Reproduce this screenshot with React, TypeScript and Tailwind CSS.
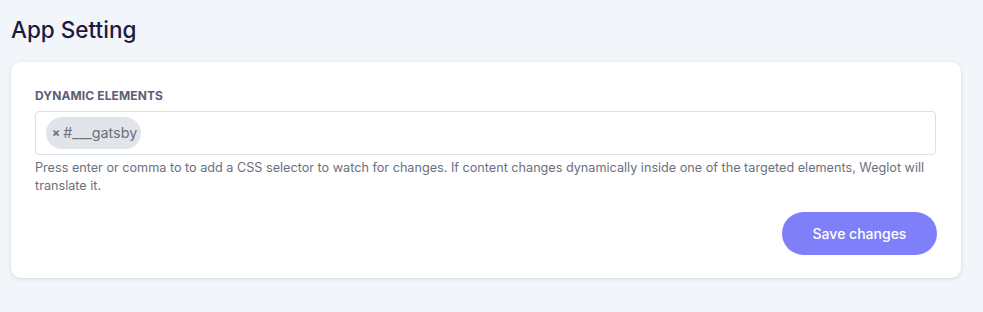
import React from "react";

export default function App() {
  return (
    <div className="min-h-[312px] w-full bg-[#f2f6fa] px-[11px] pt-[14px] font-['Inter',sans-serif]">
      <h1 className="text-[22.5px] font-medium leading-[32px] text-[#1b1b42]">App Setting</h1>
      <div className="mt-[16px] w-[950px] rounded-[10px] bg-white px-[24px] pb-[23px] pt-[26px] shadow-[0_1px_4px_rgba(0,0,0,0.12)]">
        <div className="text-[12px] font-bold leading-[16px] tracking-[0.01em] text-[#5b6072]">DYNAMIC ELEMENTS</div>
        <div className="mt-[7px] flex h-[44px] w-[901px] items-center rounded-[4px] border border-[#dcdfe4] px-[10px]">
          <span className="flex h-[32px] items-center rounded-full bg-[#e1e4e9] pl-[6px] pr-[4px] text-[14.3px] text-[#6b6f7b]">
            <span className="mr-[3px] text-[12px] font-bold leading-none">×</span>
            <span>#___gatsby</span>
          </span>
        </div>
        <p className="mt-[4px] text-[12.65px] leading-[18px] text-[#6b7080]">
          Press enter or comma to to add a CSS selector to watch for changes. If content changes dynamically inside one of the targeted elements, Weglot will translate it.
        </p>
        <div className="mt-[17px] flex w-[902px] justify-end">
          <button className="h-[43px] w-[155px] rounded-full bg-[#7f7ffa] text-[14px] font-medium text-white">Save changes</button>
        </div>
      </div>
    </div>
  );
}
